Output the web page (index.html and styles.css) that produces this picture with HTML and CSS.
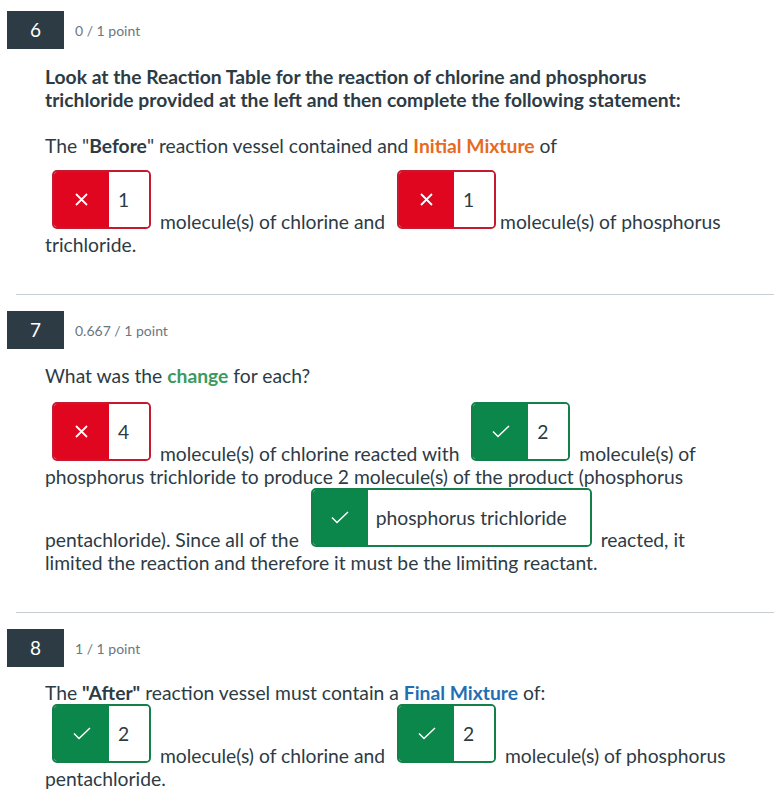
FILE: index.html
```html
<!DOCTYPE html>
<html lang="en">
<head>
<meta charset="utf-8">
<title>Quiz results</title>
<link rel="stylesheet" href="styles.css">
</head>
<body>
<div class="quiz">
  <section class="q">
    <header class="q-head"><span class="q-num">6</span><span class="q-pts">0 / 1 point</span></header>
    <div class="q-body">
      <p class="lead"><strong>Look at the Reaction Table for the reaction of chlorine and phosphorus trichloride provided at the left and then complete the following statement:</strong></p>
      <p class="stmt">The "<strong>Before</strong>" reaction vessel contained and <strong class="orange">Initial Mixture</strong> of</p>
      <p class="ans"><span class="blank wrong"><span class="blank-in"><span class="mark"><svg width="13" height="13" viewBox="0 0 13 13"><path d="M1 1L12 12M12 1L1 12" stroke="#fff" stroke-width="1.8" fill="none"/></svg></span><span class="val">1</span></span></span> molecule(s) of chlorine and <span class="blank wrong"><span class="blank-in"><span class="mark"><svg width="13" height="13" viewBox="0 0 13 13"><path d="M1 1L12 12M12 1L1 12" stroke="#fff" stroke-width="1.8" fill="none"/></svg></span><span class="val">1</span></span></span>molecule(s) of phosphorus trichloride.</p>
    </div>
  </section>
  <hr class="sep">
  <section class="q">
    <header class="q-head"><span class="q-num">7</span><span class="q-pts">0.667 / 1 point</span></header>
    <div class="q-body">
      <p class="stmt2">What was the <strong class="green">change</strong> for each?</p>
      <p class="ans"><span class="blank wrong"><span class="blank-in"><span class="mark"><svg width="13" height="13" viewBox="0 0 13 13"><path d="M1 1L12 12M12 1L1 12" stroke="#fff" stroke-width="1.8" fill="none"/></svg></span><span class="val">4</span></span></span> molecule(s) of chlorine reacted with <span class="blank right"><span class="blank-in"><span class="mark"><svg width="18" height="13" viewBox="0 0 18 13"><path d="M1 6.5L6 11.5L17 1" stroke="#fff" stroke-width="1.5" fill="none"/></svg></span><span class="val">2</span></span></span> molecule(s) of phosphorus trichloride to produce 2 molecule(s) of the product (phosphorus pentachloride). Since all of the <span class="blank right wide"><span class="blank-in"><span class="mark"><svg width="18" height="13" viewBox="0 0 18 13"><path d="M1 6.5L6 11.5L17 1" stroke="#fff" stroke-width="1.5" fill="none"/></svg></span><span class="val">phosphorus trichloride</span></span></span> reacted, it limited the reaction and therefore it must be the limiting reactant.</p>
    </div>
  </section>
  <hr class="sep">
  <section class="q">
    <header class="q-head"><span class="q-num">8</span><span class="q-pts">1 / 1 point</span></header>
    <div class="q-body">
      <p class="stmt3">The <strong>"After"</strong> reaction vessel must contain a <strong class="blue">Final Mixture</strong> of:</p>
      <p class="ans"><span class="blank right"><span class="blank-in"><span class="mark"><svg width="18" height="13" viewBox="0 0 18 13"><path d="M1 6.5L6 11.5L17 1" stroke="#fff" stroke-width="1.5" fill="none"/></svg></span><span class="val">2</span></span></span> molecule(s) of chlorine and <span class="blank right"><span class="blank-in"><span class="mark"><svg width="18" height="13" viewBox="0 0 18 13"><path d="M1 6.5L6 11.5L17 1" stroke="#fff" stroke-width="1.5" fill="none"/></svg></span><span class="val">2</span></span></span> molecule(s) of phosphorus pentachloride.</p>
    </div>
  </section>
</div>
</body>
</html>
```

FILE: styles.css
```css
html, body {
  margin: 0;
  padding: 0;
  background: #ffffff;
}
body {
  font-family: Lato, "Open Sans", sans-serif;
  color: #2d3b45;
}
.quiz {
  padding: 11px 0 0 7px;
  width: 767px;
}
.q-head {
  display: flex;
  align-items: center;
  height: 38px;
}
.q-num {
  width: 57px;
  height: 38px;
  background: #2d3b45;
  color: #ffffff;
  font-size: 19px;
  line-height: 38px;
  text-align: center;
}
.q-pts {
  margin-left: 11px;
  font-size: 14px;
  color: #6b7780;
}
.q-body {
  padding-left: 38px;
  width: 693px;
  font-size: 19.3px;
  line-height: 23px;
}
.q-body p {
  margin: 0;
}
.lead {
  margin-top: 15.5px !important;
  margin-bottom: 23px !important;
}
.stmt {
  margin-bottom: 13.5px !important;
}
.stmt2 {
  margin-top: 14.5px !important;
  margin-bottom: 15.5px !important;
}
.stmt3 {
  margin-top: 13.5px !important;
  margin-bottom: 0.5px !important;
}
.orange { color: #e66a1f; }
.green { color: #3b9a5d; }
.blue { color: #1f6fb2; }
.blank {
  display: inline-block;
  overflow: hidden;
  vertical-align: baseline;
  margin: 0 4px 0 7px;
}
.blank-in {
  display: flex;
  height: 59px;
  box-sizing: border-box;
  border: 2px solid;
  border-radius: 5px;
  overflow: hidden;
}
.wrong .blank-in { border-color: #c41a30; }
.right .blank-in { border-color: #13804a; }
.mark {
  width: 55px;
  display: flex;
  align-items: center;
  justify-content: center;
}
.wrong .mark { background: #e0061f; }
.right .mark { background: #0b874b; }
.val {
  width: 40px;
  box-sizing: border-box;
  padding-left: 9px;
  display: flex;
  align-items: center;
  background: #ffffff;
  color: #2d3b45;
}
.wide .val {
  width: 222px;
  padding-left: 8px;
}
.sep {
  border: 0;
  border-top: 1px solid #c7cdd1;
  margin: 38px 0 16px 9px;
  width: 758px;
  height: 0;
}
```
